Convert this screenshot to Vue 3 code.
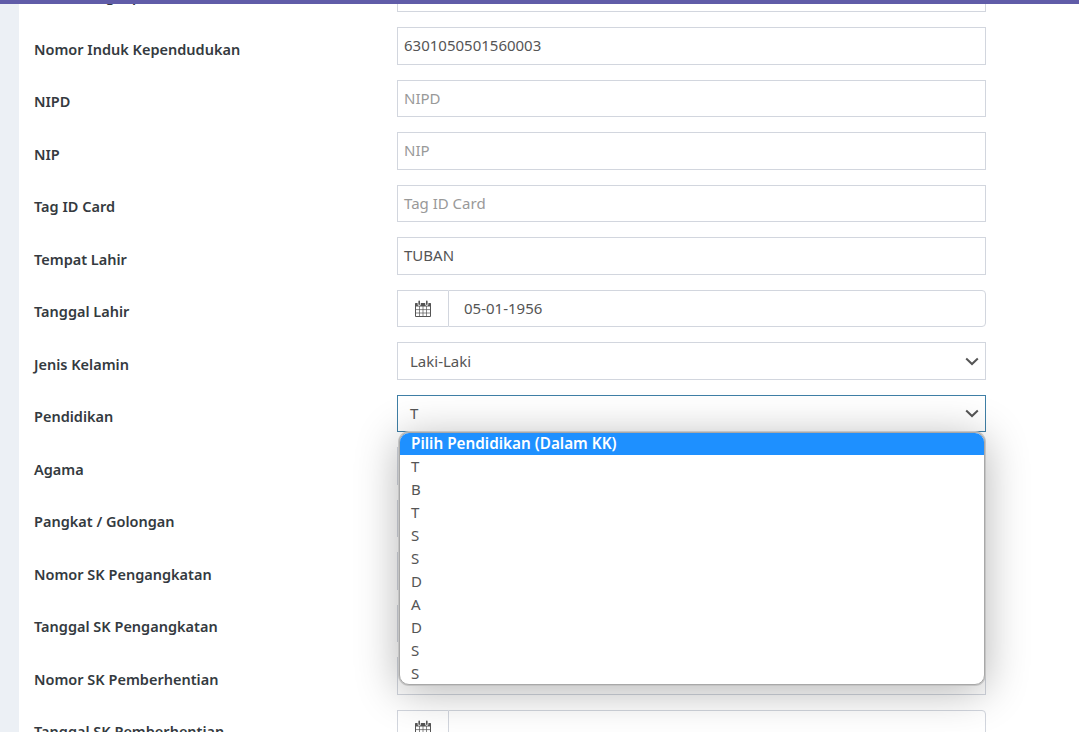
<script setup>
import { ref } from 'vue'

const rows = [
  { label: 'Nama Lengkap', type: 'text', value: '' },
  { label: 'Nomor Induk Kependudukan', type: 'text', value: '6301050501560003' },
  { label: 'NIPD', type: 'text', placeholder: 'NIPD' },
  { label: 'NIP', type: 'text', placeholder: 'NIP' },
  { label: 'Tag ID Card', type: 'text', placeholder: 'Tag ID Card' },
  { label: 'Tempat Lahir', type: 'text', value: 'TUBAN' },
  { label: 'Tanggal Lahir', type: 'date', value: '05-01-1956' },
  { label: 'Jenis Kelamin', type: 'select', value: 'Laki-Laki' },
  { label: 'Pendidikan', type: 'select', value: 'T', focus: true },
  { label: 'Agama', type: 'select', value: '' },
  { label: 'Pangkat / Golongan', type: 'text', value: '' },
  { label: 'Nomor SK Pengangkatan', type: 'text', value: '' },
  { label: 'Tanggal SK Pengangkatan', type: 'date', value: '' },
  { label: 'Nomor SK Pemberhentian', type: 'text', value: '' },
  { label: 'Tanggal SK Pemberhentian', type: 'date', value: '' },
]

const options = ref(['Pilih Pendidikan (Dalam KK)', 'T', 'B', 'T', 'S', 'S', 'D', 'A', 'D', 'S', 'S'])
</script>

<template>
  <div class="page">
    <div class="topbar"></div>
    <aside class="side"></aside>
    <main class="content">
      <form class="form">
        <div v-for="row in rows" :key="row.label" class="row">
          <label class="lbl">{{ row.label }}</label>
          <div v-if="row.type === 'date'" class="group">
            <span class="addon">
              <svg class="cal" viewBox="0 0 16 17" aria-hidden="true">
                <path d="M.5 3.5h15v13h-15z" fill="none" stroke="currentColor" stroke-width="1"/>
                <path d="M.5 3h15v3.5h-15z" fill="currentColor"/>
                <path d="M1 9.6h14M1 13h14M4.5 6v10M8 6v10M11.5 6v10" fill="none" stroke="currentColor" stroke-width=".7"/>
                <path d="M4.2 1.2v3M11.8 1.2v3" fill="none" stroke="#fff" stroke-width="3.2" stroke-linecap="round"/>
                <path d="M4.2 1.2v3M11.8 1.2v3" fill="none" stroke="currentColor" stroke-width="1.6" stroke-linecap="round"/>
              </svg>
            </span>
            <span class="field field-date">{{ row.value }}</span>
          </div>
          <div v-else-if="row.type === 'select'" class="field field-select" :class="{ focus: row.focus }">
            <span>{{ row.value }}</span>
            <svg class="chev" viewBox="0 0 14 9" aria-hidden="true">
              <polyline points="1.2,1.5 7,7 12.8,1.5" fill="none" stroke="currentColor" stroke-width="2"/>
            </svg>
          </div>
          <div v-else class="field" :class="{ plh: row.placeholder }">{{ row.value || row.placeholder }}</div>
        </div>
      </form>
    </main>
    <ul class="dropdown" role="listbox">
      <li v-for="(opt, i) in options" :key="i" class="opt" :class="{ sel: i === 0 }" role="option">{{ opt }}</li>
    </ul>
  </div>
</template>

<style>
html, body { margin: 0; background: #fff; overflow: hidden; }
</style>

<style scoped>
* { box-sizing: border-box; }

.page {
  position: relative;
  display: flex;
  height: 732px;
  overflow: hidden;
  font-family: "Noto Sans", "Liberation Sans", sans-serif;
  font-size: 15px;
  color: #343a40;
  background: #fff;
}
.topbar {
  position: absolute;
  left: 0;
  right: 0;
  top: 0;
  height: 4px;
  background: #605ca8;
  z-index: 5;
}
.side {
  width: 19px;
  flex: none;
  background: #ecf0f5;
}
.content {
  flex: 1;
  padding: 0 93px 0 15px;
}
.form {
  margin-top: -25.2px;
}
.row {
  display: flex;
  height: 37.5px;
  margin-bottom: 15px;
}
.lbl {
  width: 363px;
  flex: none;
  padding-top: 11.5px;
  font-weight: 600;
  font-size: 14.5px;
  line-height: 20px;
  color: #343a40;
}
.field {
  flex: 1;
  display: flex;
  align-items: center;
  height: 37.5px;
  padding: 0 6px 2px;
  border: 1px solid #d2d6de;
  color: #555;
  line-height: 20px;
  background: #fff;
}
.plh { color: #999; }
.field-select {
  justify-content: space-between;
  padding: 0 6px 0 12px;
}
.field-select.focus { border-color: #3f7fa6; }
.field-select.focus span { margin-bottom: 2px; }
.chev {
  width: 14px;
  height: 9px;
  color: #555;
}
.group {
  flex: 1;
  display: flex;
  height: 37.5px;
}
.addon {
  width: 51px;
  flex: none;
  display: flex;
  align-items: center;
  justify-content: center;
  border: 1px solid #d2d6de;
  border-right: 0;
  color: #555;
}
.cal {
  width: 16px;
  height: 17px;
}
.field-date {
  padding: 0 15px 2px;
  border-radius: 0 4px 4px 0;
}
.dropdown {
  position: absolute;
  left: 399px;
  top: 432px;
  width: 586px;
  height: 253px;
  margin: 0;
  padding: 0;
  list-style: none;
  overflow: hidden;
  background: #fff;
  border: 1px solid #a8a8a8;
  border-radius: 10px;
  box-shadow: 0 0 0 1px #c4c4c4, 0 6px 44px rgba(0, 0, 0, .3);
  z-index: 4;
}
.opt {
  height: 23px;
  padding-left: 11px;
  line-height: 22px;
  color: #555;
}
.opt.sel {
  height: 22px;
  line-height: 20px;
  background: #1e90ff;
  color: #fff;
  font-weight: 600;
  font-size: 15.3px;
}
</style>
